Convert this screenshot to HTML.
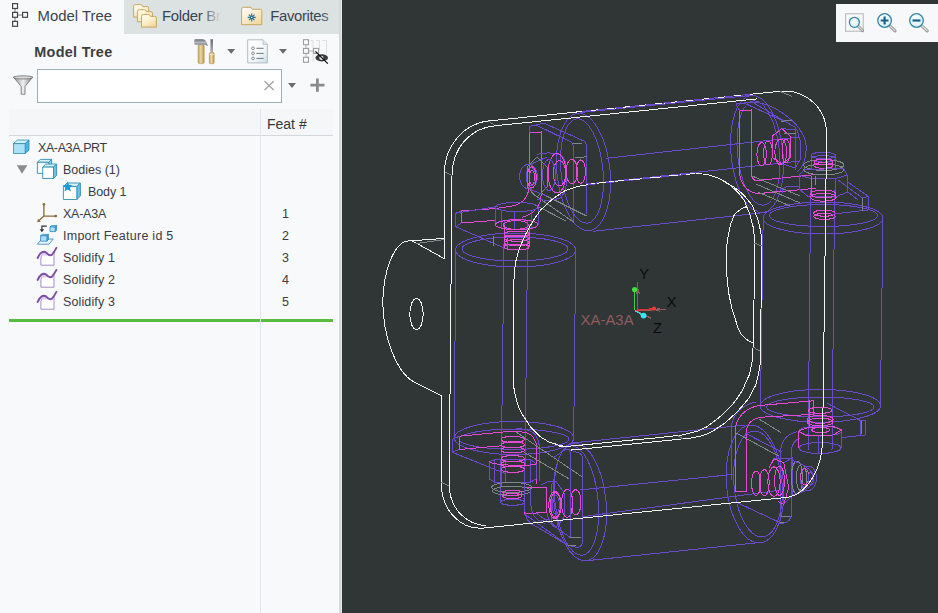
<!DOCTYPE html>
<html><head><meta charset="utf-8"><title>Model Tree</title>
<style>
html,body{margin:0;padding:0;}
body{width:938px;height:613px;overflow:hidden;background:#2f3635;font-family:"Liberation Sans",sans-serif;position:relative;}
#left{position:absolute;left:0;top:0;width:339px;height:613px;background:#f7f9fb;}
#split{position:absolute;left:339px;top:0;width:3px;height:613px;background:linear-gradient(90deg,#d3d8d9 0,#d3d8d9 67%,#e4e8e9 67%);}
#tabs{position:absolute;left:0;top:0;width:339px;height:34px;background:#dce1e2;}
#tab1{position:absolute;left:0;top:0;width:124px;height:34px;background:#f7f9fb;}
.t{position:absolute;white-space:nowrap;color:#3b3f42;line-height:1;}
.tab{font-size:14.9px;color:#3a4552;}
.row{font-size:12.5px;color:#3a3c44;}
.num{font-size:12.5px;color:#3a3c44;}
#hdr{position:absolute;left:9px;top:109px;width:324px;height:26px;background:#f4f6f7;border-bottom:1px solid #d3d8da;}
#colsep{position:absolute;left:260px;top:109px;width:1px;height:504px;background:#e3e6e8;z-index:3;}
#filter{position:absolute;left:37px;top:69px;width:243px;height:32px;background:#fff;border:1px solid #9fb0b6;}
#green{position:absolute;left:9px;top:319px;width:324px;height:3px;background:#58bd3f;}
#vp{position:absolute;left:342px;top:0;}
#ztb{position:absolute;left:836px;top:4px;width:102px;height:38px;background:#f7f8fa;}
</style></head><body>
<div id="left"></div>
<div id="split"></div>
<div id="tabs"><div id="tab1"></div></div>
<div class="t tab" id="tt1" style="left:37.5px;top:8.6px;">Model Tree</div>
<div class="t tab" id="tt2" style="left:162px;top:8.6px;letter-spacing:-0.3px;">Folder Br</div>
<div class="t tab" id="tt3" style="left:270.3px;top:8.6px;letter-spacing:-0.35px;">Favorites</div>
<div style="position:absolute;left:203px;top:4px;width:22px;height:26px;background:linear-gradient(90deg,rgba(220,225,226,0) 0%,rgba(220,225,226,0.55) 40%,rgba(220,225,226,0.92) 75%,#dce1e2 100%);"></div>
<div style="position:absolute;left:320px;top:4px;width:12px;height:26px;background:linear-gradient(90deg,rgba(220,225,226,0) 0%,rgba(220,225,226,0.45) 100%);"></div>
<div class="t" id="mt" style="left:34.3px;top:44.5px;font-weight:bold;font-size:14.4px;letter-spacing:0.3px;color:#3d3f42;">Model Tree</div>
<div id="filter"></div>
<div id="hdr"></div>
<div id="colsep"></div>
<div class="t" id="feat" style="left:267px;top:117px;font-size:14px;color:#33383c;">Feat #</div>
<div class="t row" id="r1" style="left:38px;top:142px;letter-spacing:-0.4px;">XA-A3A.PRT</div>
<div class="t row" id="r2" style="left:63px;top:164px;">Bodies (1)</div>
<div class="t row" id="r3" style="left:88px;top:186px;letter-spacing:-0.1px;">Body 1</div>
<div class="t row" id="r4" style="left:63px;top:208px;letter-spacing:-0.25px;">XA-A3A</div>
<div class="t row" id="r5" style="left:63px;top:230px;letter-spacing:0.26px;">Import Feature id 5</div>
<div class="t row" id="r6" style="left:63px;top:252px;letter-spacing:0.13px;">Solidify 1</div>
<div class="t row" id="r7" style="left:63px;top:274px;letter-spacing:0.13px;">Solidify 2</div>
<div class="t row" id="r8" style="left:63px;top:296px;letter-spacing:0.13px;">Solidify 3</div>
<div class="t num" id="n1" style="left:282px;top:208px;">1</div>
<div class="t num" id="n2" style="left:282px;top:230px;">2</div>
<div class="t num" id="n3" style="left:282px;top:252px;">3</div>
<div class="t num" id="n4" style="left:282px;top:274px;">4</div>
<div class="t num" id="n5" style="left:282px;top:296px;">5</div>
<div id="green"></div>
<svg id="icons" width="342" height="613" style="position:absolute;left:0;top:0;">
<defs>
<linearGradient id="gFold" x1="0" y1="0" x2="0.6" y2="1"><stop offset="0" stop-color="#fffdf4"/><stop offset="0.55" stop-color="#fcf0cf"/><stop offset="1" stop-color="#f3d99f"/></linearGradient>
<linearGradient id="gTan" x1="0" y1="0" x2="1" y2="0"><stop offset="0" stop-color="#c6a365"/><stop offset="0.45" stop-color="#ecd7a6"/><stop offset="1" stop-color="#b8934f"/></linearGradient>
<linearGradient id="gSteel2" x1="0" y1="0" x2="0" y2="1"><stop offset="0" stop-color="#62656f"/><stop offset="0.45" stop-color="#b4b7bf"/><stop offset="1" stop-color="#6a6d77"/></linearGradient>
<linearGradient id="gSteel" x1="0" y1="0" x2="0" y2="1"><stop offset="0" stop-color="#6d707a"/><stop offset="1" stop-color="#adb0ba"/></linearGradient>
<linearGradient id="gDoc" x1="0" y1="0" x2="1" y2="1"><stop offset="0" stop-color="#ffffff"/><stop offset="0.6" stop-color="#f4f8fa"/><stop offset="1" stop-color="#c9dde6"/></linearGradient>
<linearGradient id="gFun" x1="0" y1="0" x2="1" y2="0"><stop offset="0" stop-color="#8a8a8a"/><stop offset="0.5" stop-color="#f0f0f0"/><stop offset="1" stop-color="#7a7a7a"/></linearGradient>
<linearGradient id="gCubeW" x1="0" y1="0" x2="1" y2="1"><stop offset="0" stop-color="#ffffff"/><stop offset="1" stop-color="#eaf6fb"/></linearGradient>
</defs>
<!-- tab1 tree icon -->
<g fill="#fbfcfd" stroke="#454545" stroke-width="1.2">
<path d="M15 9 V12 M15 18 V21 M18 15 H22" stroke="#777" stroke-width="1" fill="none"/>
<rect x="12.6" y="3.6" width="4.9" height="4.9"/><rect x="12.6" y="12.4" width="4.9" height="4.9"/><rect x="12.6" y="21.4" width="4.9" height="4.9"/><rect x="22.6" y="12.4" width="4.9" height="4.9"/>
</g>
<!-- folder browser icon -->
<g fill="url(#gFold)" stroke="#c9a75e" stroke-width="1">
<path d="M133.6 17.1 V6.6 Q133.6 4.6 135.6 4.6 H140.5 Q142 4.6 142.6 6.6 H147.2 Q148.7 6.6 148.7 8.1 V17.1 Z"/>
<path d="M137.4 21.8 V11.7 Q137.4 9.7 139.4 9.7 H144.3 Q145.8 9.7 146.4 11.7 H151 Q152.5 11.7 152.5 13.2 V21.8 Z"/>
<path d="M141.5 27.1 V16.4 Q141.5 14.4 143.5 14.4 H148.4 Q149.9 14.4 150.5 16.4 H154.8 Q156.3 16.4 156.3 17.9 V27.1 Z"/>
</g>
<!-- favorites icon -->
<path d="M241.6 24.7 V9.3 Q241.6 7.3 243.6 7.3 H250 Q251.6 7.3 252.3 9.3 H260.3 Q261.8 9.3 261.8 10.8 V24.7 Z" fill="url(#gFold)" stroke="#c9a75e" stroke-width="1"/>
<g stroke="#1f6e98" stroke-width="1.1" fill="none"><path d="M251.7 13.4 V21.4 M247.7 17.4 H255.7 M248.9 14.6 L254.5 20.2 M254.5 14.6 L248.9 20.2"/></g>
<circle cx="251.7" cy="17.4" r="1.6" fill="#1f6e98"/><circle cx="251.7" cy="17.4" r="0.7" fill="#fff"/>
<!-- hammer / screwdriver -->
<rect x="198.1" y="44.6" width="6.1" height="19" rx="1.4" fill="url(#gTan)" stroke="#a88748" stroke-width="0.5"/>
<path d="M194.3 40.4 Q194.3 39.2 195.5 39.2 H202.6 Q206.8 39.6 207.9 46.3 L205.8 45.1 Q205 44.7 204.2 44.8 H195.5 Q194.3 44.8 194.3 43.6 Z" fill="url(#gSteel2)"/>
<rect x="210.4" y="39.2" width="2.6" height="13.4" fill="url(#gSteel)"/>
<rect x="209.3" y="52.6" width="4.9" height="11.1" rx="1.1" fill="url(#gTan)" stroke="#a88748" stroke-width="0.5"/>
<rect x="209.4" y="54.2" width="4.7" height="0.8" fill="#f6ecd0"/>
<path d="M227.2 49 H235.2 L231.2 53.7 Z" fill="#6b6b6b"/>
<path d="M279 49 H287 L283 53.7 Z" fill="#6b6b6b"/>
<!-- doc list icon -->
<path d="M247.7 39.8 H263 L267.4 44.4 V62.9 H247.7 Z" fill="url(#gDoc)" stroke="#b4bcc4" stroke-width="1"/>
<path d="M263 39.8 V44.4 H267.4" fill="#dfeaf0" stroke="#b4bcc4" stroke-width="0.8"/>
<g fill="#f4f4f4" stroke="#6a6a6a" stroke-width="0.7"><circle cx="253" cy="48.3" r="1.4"/><circle cx="253" cy="53.4" r="1.4"/><circle cx="253" cy="58.4" r="1.4"/></g>
<path d="M256.4 48.3 H263.6 M256.4 53.4 H263.6 M256.4 58.4 H263.6" stroke="#666" stroke-width="0.9"/>
<!-- tree eye icon -->
<g fill="none" stroke="#dcdfe0" stroke-width="1"><path d="M310.5 40.5 H313 V62 M316 40.5 H319.5 V50 M322 40.5 H326.5 V54"/></g>
<path d="M306 45 V48 M306 54 V57 M309 51 H313" stroke="#b5b5b5" stroke-width="1" fill="none"/>
<g fill="#fbfcfd" stroke="#9d9d9d" stroke-width="1.1"><rect x="303.5" y="39.7" width="5" height="5"/><rect x="303.5" y="48.4" width="5" height="5"/><rect x="303.5" y="57.3" width="5" height="5"/><rect x="313.6" y="48.4" width="5" height="5"/></g>
<ellipse cx="321.7" cy="57.8" rx="6.3" ry="3.6" fill="#3c3c3c"/><ellipse cx="321.4" cy="57.9" rx="2.1" ry="2.1" fill="#e8e8e8"/>
<path d="M315.4 51.4 L327.8 63.6" stroke="#111" stroke-width="1.3"/>
<!-- funnel -->
<path d="M13.4 77 Q23 79 32.8 77 L25 86.5 V94.3 H21.2 V86.5 Z" fill="url(#gFun)" stroke="#707070" stroke-width="0.8"/>
<ellipse cx="23.1" cy="77.4" rx="9.7" ry="1.6" fill="#d9d9d9" stroke="#707070" stroke-width="0.8"/>
<!-- filter clear X, dropdown, plus -->
<path d="M264.5 81.2 L273.7 90 M273.7 81.2 L264.5 90" stroke="#a3a3a3" stroke-width="1.3" fill="none"/>
<path d="M288 83 H296 L292 88 Z" fill="#6b6b6b"/>
<path d="M317.4 78.6 V91.8 M310.4 85.2 H324.5" stroke="#8a8a8a" stroke-width="2.8" fill="none"/>
<!-- part cube -->
<g stroke="#2d8db6" stroke-width="0.8" stroke-linejoin="round">
<path d="M13.5 143.6 L17.4 140 H29 L25.2 143.6 Z" fill="#d4f0fb"/>
<path d="M25.2 143.6 L29 140 V150 L25.2 153.5 Z" fill="#4db3e6"/>
<rect x="13.5" y="143.6" width="11.7" height="9.9" fill="#a9e1f6"/>
</g>
<!-- expand triangle -->
<path d="M16.7 165.2 H27.4 L22 173.7 Z" fill="#8c8c8c"/>
<!-- bodies icon -->
<g stroke="#2f8fb8" stroke-width="0.9" stroke-linejoin="round">
<path d="M37.4 162.3 L40.3 159.4 H51.6 L48.7 162.3 Z" fill="#d9f1fa"/><path d="M48.7 162.3 L51.6 159.4 V170.5 L48.7 173.4 Z" fill="#8ed0ec"/><rect x="37.4" y="162.3" width="11.3" height="11.1" fill="url(#gCubeW)"/>
<path d="M42.7 167.1 L45.8 164 H56.6 L53.5 167.1 Z" fill="#d9f1fa"/><path d="M53.5 167.1 L56.6 164 V175.4 L53.5 178.5 Z" fill="#6ec0e6"/><rect x="42.7" y="167.1" width="10.8" height="11.4" fill="#ffffff"/>
</g>
<!-- body 1 icon -->
<g stroke="#2f8fb8" stroke-width="0.9" stroke-linejoin="round">
<path d="M63.4 186.6 L67 183 H80.4 L76.8 186.6 Z" fill="#d9f1fa"/><path d="M76.8 186.6 L80.4 183 V196 L76.8 199.5 Z" fill="#6ec0e6"/><rect x="63.4" y="186.6" width="13.4" height="12.9" fill="#ffffff"/>
</g>
<path d="M67.6 181.6 L69 185 L72.8 185.3 L69.9 187.7 L70.9 191.4 L67.6 189.4 L64.3 191.4 L65.3 187.7 L62.4 185.3 L66.2 185 Z" fill="#1e9ad0"/>
<!-- csys icon -->
<g stroke="#8a6a35" stroke-width="1.3" fill="none"><path d="M43.9 204.5 V216.1 H55.5 M43.9 216.1 L38.3 221.2"/></g>
<g fill="#8a6a35"><circle cx="43.9" cy="204.3" r="1.3"/><circle cx="55.8" cy="216.1" r="1.3"/><path d="M37.2 222.3 L38 218.8 L40.8 221.6 Z"/></g>
<!-- import icon -->
<path d="M46.8 226.1 H41.9 V230" stroke="#333" stroke-width="1.2" fill="none"/><path d="M39.6 229.3 H44.2 L41.9 232.2 Z" fill="#333"/>
<g stroke="#2a86c0" stroke-width="0.8" stroke-linejoin="round">
<path d="M37.4 244.2 L41.6 239 H53.3 L49 244.2 Z" fill="#eaf6fc"/>
<path d="M50 227 L51.5 225.6 H56.6 L55.2 227 Z" fill="#d9f1fa"/><path d="M55.2 227 L56.6 225.6 V230.2 L55.2 231.6 Z" fill="#4db3e6"/><rect x="50" y="227" width="5.2" height="4.6" fill="#a9e1f6"/>
<path d="M40.6 235.8 L42.1 234.4 H48.4 L46.9 235.8 Z" fill="#d9f1fa"/><path d="M46.9 235.8 L48.4 234.4 V239.8 L46.9 241.2 Z" fill="#4db3e6"/><rect x="40.6" y="235.8" width="6.3" height="5.4" fill="#a9e1f6"/>
</g>
<!-- solidify icons -->
<g>
<path d="M40.9 257.5 Q43 251 46.5 253.5 Q49.5 256.5 51.5 255.2 L54 252 V265.2 H40.9 Z" fill="#ffffff" stroke="#a78cc8" stroke-width="1"/>
<path d="M43.5 252.6 Q47 252.5 49 255 Q51 256.5 53.8 252.3 L53.8 255.5 L41 255.5 Z" fill="#d9cbe9" stroke="none"/>
<path d="M37.6 258 Q41.5 249.5 46.3 252.6 Q49.5 256.3 51.8 254.8 Q54 252.5 56.4 247.9" fill="none" stroke="#7d4ea6" stroke-width="1.9" stroke-linecap="round"/>
</g>
<g transform="translate(0 22)">
<path d="M40.9 257.5 Q43 251 46.5 253.5 Q49.5 256.5 51.5 255.2 L54 252 V265.2 H40.9 Z" fill="#ffffff" stroke="#a78cc8" stroke-width="1"/>
<path d="M43.5 252.6 Q47 252.5 49 255 Q51 256.5 53.8 252.3 L53.8 255.5 L41 255.5 Z" fill="#d9cbe9" stroke="none"/>
<path d="M37.6 258 Q41.5 249.5 46.3 252.6 Q49.5 256.3 51.8 254.8 Q54 252.5 56.4 247.9" fill="none" stroke="#7d4ea6" stroke-width="1.9" stroke-linecap="round"/>
</g>
<g transform="translate(0 44)">
<path d="M40.9 257.5 Q43 251 46.5 253.5 Q49.5 256.5 51.5 255.2 L54 252 V265.2 H40.9 Z" fill="#ffffff" stroke="#a78cc8" stroke-width="1"/>
<path d="M43.5 252.6 Q47 252.5 49 255 Q51 256.5 53.8 252.3 L53.8 255.5 L41 255.5 Z" fill="#d9cbe9" stroke="none"/>
<path d="M37.6 258 Q41.5 249.5 46.3 252.6 Q49.5 256.3 51.8 254.8 Q54 252.5 56.4 247.9" fill="none" stroke="#7d4ea6" stroke-width="1.9" stroke-linecap="round"/>
</g>

</svg>
<svg id="vp" width="596" height="613" viewBox="342 0 596 613" fill="none" stroke-width="1" shape-rendering="crispEdges">
<ellipse cx="515.7" cy="250" rx="60" ry="17" stroke="#6a49cf" stroke-width="1"/>
<ellipse cx="515" cy="249" rx="53" ry="12" stroke="#6a49cf" stroke-width="1"/>
<ellipse cx="514" cy="438" rx="59.7" ry="16.5" stroke="#6a49cf" stroke-width="1"/>
<ellipse cx="514" cy="439.2" rx="54.9" ry="10.1" stroke="#6a49cf" stroke-width="1"/>
<line x1="455.7" y1="250" x2="454.3" y2="437" stroke="#6a49cf" stroke-width="1"/>
<line x1="575.7" y1="250" x2="573.7" y2="437" stroke="#6a49cf" stroke-width="1"/>
<line x1="504.3" y1="221" x2="500.8" y2="503" stroke="#6a49cf" stroke-width="1"/>
<line x1="527.8" y1="221" x2="524.6" y2="503" stroke="#6a49cf" stroke-width="1"/>
<ellipse cx="823" cy="218" rx="60" ry="16" stroke="#6a49cf" stroke-width="1"/>
<ellipse cx="823.3" cy="215.5" rx="54" ry="11" stroke="#6a49cf" stroke-width="1"/>
<ellipse cx="820.4" cy="405.8" rx="60.2" ry="16.4" stroke="#6a49cf" stroke-width="1"/>
<ellipse cx="820.2" cy="407" rx="53.7" ry="10" stroke="#6a49cf" stroke-width="1"/>
<line x1="763.2" y1="218" x2="760.5" y2="404.5" stroke="#6a49cf" stroke-width="1"/>
<line x1="883" y1="218" x2="880.4" y2="404.5" stroke="#6a49cf" stroke-width="1"/>
<line x1="810.6" y1="190" x2="808.2" y2="450" stroke="#6a49cf" stroke-width="1"/>
<line x1="834.6" y1="190" x2="832" y2="450" stroke="#6a49cf" stroke-width="1"/>
<ellipse cx="583.5" cy="172" rx="26.6" ry="59" stroke="#6a49cf" stroke-width="1" transform="rotate(-5.7 583.5 172)"/>
<ellipse cx="582" cy="171" rx="21" ry="52.5" stroke="#6a49cf" stroke-width="1" transform="rotate(-5.7 582 171)"/>
<ellipse cx="757" cy="154" rx="26" ry="59" stroke="#6a49cf" stroke-width="1" transform="rotate(-5.7 757 154)"/>
<ellipse cx="758.5" cy="153" rx="21" ry="52.5" stroke="#6a49cf" stroke-width="1" transform="rotate(-5.7 758.5 153)"/>
<line x1="580" y1="112.5" x2="750" y2="95.5" stroke="#6a49cf" stroke-width="1"/>
<line x1="593" y1="231.3" x2="766" y2="212.4" stroke="#6a49cf" stroke-width="1"/>
<line x1="605.8" y1="158.4" x2="749" y2="142.5" stroke="#6a49cf" stroke-width="1"/>
<line x1="586.6" y1="184" x2="736.5" y2="168" stroke="#6a49cf" stroke-width="1"/>
<line x1="736.5" y1="168" x2="800" y2="161" stroke="#6a49cf" stroke-width="1"/>
<line x1="749" y1="142.5" x2="800" y2="137" stroke="#6a49cf" stroke-width="1"/>
<ellipse cx="580" cy="502" rx="26" ry="59" stroke="#6a49cf" stroke-width="1" transform="rotate(-6 580 502)"/>
<ellipse cx="576.5" cy="500.5" rx="21.5" ry="55" stroke="#6a49cf" stroke-width="1" transform="rotate(-6 576.5 500.5)"/>
<ellipse cx="755" cy="484" rx="28.5" ry="59" stroke="#6a49cf" stroke-width="1" transform="rotate(-5 755 484)"/>
<ellipse cx="758" cy="484" rx="24" ry="53" stroke="#6a49cf" stroke-width="1" transform="rotate(-5 758 484)"/>
<line x1="569" y1="443.3" x2="745.5" y2="425" stroke="#6a49cf" stroke-width="1"/>
<line x1="586" y1="560.8" x2="756.6" y2="542.8" stroke="#6a49cf" stroke-width="1"/>
<line x1="580" y1="489.9" x2="734.4" y2="474.3" stroke="#6a49cf" stroke-width="1"/>
<line x1="582.4" y1="516.7" x2="781.5" y2="490" stroke="#6a49cf" stroke-width="1"/>
<path d="M541.1 195 L541.1 132 L529.2 132.9 L529.2 184.5 C529 195 524 203 513.8 205.8 L495.8 208.5 L461.3 211 L461.3 223 L495.8 220.3" stroke="#e64ad6" stroke-width="1" />
<path d="M541.1 195 C541 205 535 214 522 217.5" stroke="#e64ad6" stroke-width="1" />
<path d="M529.5 133 L529.5 126.4 L544 123.2 L584.5 141.3 C586.3 143 586.6 145 586.6 147.7 L586.6 214" stroke="#6a49cf" stroke-width="1" />
<path d="M536 124.9 L571.7 142.4 C573.3 144 573.8 146 573.8 149 L573.8 222" stroke="#6a49cf" stroke-width="1" />
<path d="M461.3 211 L455.7 213.2 L455.7 226.7 L506.5 249 M455.7 213.2 L498 206.4 M455.7 226.7 L461.3 223" stroke="#6a49cf" stroke-width="1" />
<path d="M541.8 193.6 L586.6 216 M531 192.5 L573.8 222.3 M535 205 L566 221" stroke="#7d8787" stroke-width="1" />
<line x1="571.7" y1="143" x2="582" y2="143" stroke="#7d8787" stroke-width="1"/>
<line x1="574.9" y1="158" x2="586.6" y2="156.7" stroke="#7d8787" stroke-width="1"/>
<ellipse cx="516.8" cy="207" rx="21.5" ry="4.6" stroke="#6a49cf" stroke-width="1"/>
<ellipse cx="516.8" cy="224.5" rx="21.5" ry="5" stroke="#6a49cf" stroke-width="1"/>
<line x1="495.3" y1="207" x2="495.3" y2="224.5" stroke="#6a49cf" stroke-width="1"/>
<line x1="538.3" y1="207" x2="538.3" y2="224.5" stroke="#6a49cf" stroke-width="1"/>
<line x1="514.8" y1="211.6" x2="514.8" y2="229.5" stroke="#6a49cf" stroke-width="1"/>
<line x1="501" y1="210.3" x2="501" y2="228" stroke="#6a49cf" stroke-width="1"/>
<line x1="531" y1="210.3" x2="531" y2="228" stroke="#6a49cf" stroke-width="1"/>
<ellipse cx="516.8" cy="224.7" rx="21.2" ry="5" stroke="#e64ad6" stroke-width="1"/>
<ellipse cx="515.9" cy="225" rx="12.7" ry="4.3" stroke="#e64ad6" stroke-width="1"/>
<ellipse cx="516.7" cy="234" rx="12.2" ry="3" stroke="#e64ad6" stroke-width="1"/>
<ellipse cx="516.7" cy="238.3" rx="12.2" ry="3" stroke="#e64ad6" stroke-width="1"/>
<ellipse cx="516.7" cy="242.6" rx="12.2" ry="3" stroke="#e64ad6" stroke-width="1"/>
<ellipse cx="516.7" cy="247" rx="12.2" ry="3" stroke="#e64ad6" stroke-width="1"/>
<line x1="504.5" y1="225" x2="504.5" y2="247" stroke="#e64ad6" stroke-width="1"/>
<line x1="529" y1="225" x2="529" y2="247" stroke="#e64ad6" stroke-width="1"/>
<line x1="493" y1="236" x2="493" y2="246" stroke="#7d8787" stroke-width="1"/>
<line x1="507" y1="238" x2="507" y2="249" stroke="#7d8787" stroke-width="1"/>
<ellipse cx="528.5" cy="176.5" rx="9" ry="12.2" stroke="#6a49cf" stroke-width="1"/>
<ellipse cx="531" cy="176.8" rx="5" ry="9.2" stroke="#6a49cf" stroke-width="1"/>
<ellipse cx="531.8" cy="177.3" rx="4.5" ry="10.6" stroke="#e64ad6" stroke-width="1"/>
<ellipse cx="532" cy="177.3" rx="2.4" ry="7" stroke="#e64ad6" stroke-width="1"/>
<path d="M527.0 167.0 L537.0 157.0 L547.0 167.0 L547.0 187.0 L537.0 197.0 L527.0 187.0 Z" stroke="#7d8787" stroke-width="1" />
<line x1="527" y1="167" x2="537" y2="157" stroke="#7d8787" stroke-width="1"/>
<line x1="527" y1="187" x2="537" y2="197" stroke="#7d8787" stroke-width="1"/>
<path d="M537 154.5 C543 152.5 556 152 562 156 C566 160 567 168 567 176 C567 186 565 194 560 198 C553 201 542 200.5 537 199" stroke="#6a49cf" stroke-width="1" />
<line x1="529" y1="165" x2="547" y2="157" stroke="#6a49cf" stroke-width="1"/>
<line x1="529" y1="189" x2="547" y2="196" stroke="#6a49cf" stroke-width="1"/>
<ellipse cx="557" cy="173.2" rx="9" ry="19.6" stroke="#e64ad6" stroke-width="1"/>
<ellipse cx="559.5" cy="173.2" rx="6.2" ry="12.7" stroke="#e64ad6" stroke-width="1"/>
<ellipse cx="571.8" cy="171.6" rx="5.7" ry="12.2" stroke="#e64ad6" stroke-width="1"/>
<ellipse cx="580.8" cy="171.6" rx="4.6" ry="11.7" stroke="#e64ad6" stroke-width="1"/>
<ellipse cx="549" cy="175" rx="6.5" ry="15.5" stroke="#6a49cf" stroke-width="1"/>
<path d="M501 445.8 L459.4 449.5 L459.4 436.2 L513.8 431 C525 431.5 531 434 533 437.3 C535.5 440.5 536.8 444 536.8 449 L536.8 484.2" stroke="#e64ad6" stroke-width="1" />
<path d="M524.5 514 L524.5 487.4 L547 487.4 M524.5 514 L536.2 513" stroke="#e64ad6" stroke-width="1" />
<path d="M459.4 436.2 L452 439.4 L452 452.2 L505.3 473.6 M452 452.2 L459.4 449.5" stroke="#6a49cf" stroke-width="1" />
<path d="M516 428.5 C527 429 534 432 536 436 C538.5 440 539.4 444 539.4 449 L539.4 481" stroke="#6a49cf" stroke-width="1" />
<path d="M516 432 L582 476.8 M522.3 451.2 L569.3 479" stroke="#7d8787" stroke-width="1" />
<path d="M489.3 461.8 L494.6 459.7 L530.9 459.7 L536.2 464 L536.2 478.9 L530.9 482 L494.6 482 L489.3 478.9 Z" stroke="#6a49cf" stroke-width="1" />
<path d="M494.6 459.7 L494.6 482 M500 459.7 L500 503 M505.3 459.7 L505.3 482 M524.5 459.7 L524.5 503 M530.9 459.7 L530.9 482" stroke="#6a49cf" stroke-width="1" />
<path d="M489.3 461.8 C496 466 530 466 536.2 464" stroke="#e64ad6" stroke-width="1" />
<ellipse cx="511.7" cy="487.4" rx="20" ry="5" stroke="#7d8787" stroke-width="1"/>
<ellipse cx="511.7" cy="490.8" rx="19" ry="4.6" stroke="#7d8787" stroke-width="1"/>
<ellipse cx="512.5" cy="502.3" rx="12" ry="3" stroke="#6a49cf" stroke-width="1"/>
<ellipse cx="512.3" cy="492.8" rx="9.5" ry="2.6" stroke="#e64ad6" stroke-width="1"/>
<ellipse cx="512.3" cy="496" rx="9.5" ry="2.6" stroke="#e64ad6" stroke-width="1"/>
<ellipse cx="512.8" cy="439.4" rx="11.7" ry="3" stroke="#e64ad6" stroke-width="1"/>
<ellipse cx="512.8" cy="444.8" rx="11.7" ry="3" stroke="#e64ad6" stroke-width="1"/>
<ellipse cx="512.8" cy="450" rx="11.7" ry="3" stroke="#e64ad6" stroke-width="1"/>
<ellipse cx="512.8" cy="458.6" rx="11.7" ry="3" stroke="#e64ad6" stroke-width="1"/>
<ellipse cx="512.8" cy="464" rx="11.7" ry="3" stroke="#e64ad6" stroke-width="1"/>
<ellipse cx="512.8" cy="469.3" rx="11.7" ry="3" stroke="#e64ad6" stroke-width="1"/>
<path d="M546.8 482 L556 481.3 L564 492.7 L564 517.2 L555.8 527.8 L548.4 518.8 L546.8 512.3" stroke="#6a49cf" stroke-width="1" />
<path d="M536.2 487.8 L546.8 487.8 L546.8 512.3 L536.2 513" stroke="#e64ad6" stroke-width="1" />
<path d="M546.8 482 L541 485 M548.4 518.8 L541 521 M556 481.3 L551 484.5 L551 524 L555.8 527.8" stroke="#6a49cf" stroke-width="1" />
<ellipse cx="555" cy="505" rx="6.2" ry="13.4" stroke="#e64ad6" stroke-width="1"/>
<ellipse cx="555.4" cy="505" rx="5.2" ry="12.2" stroke="#e64ad6" stroke-width="1"/>
<ellipse cx="555.8" cy="505" rx="3.6" ry="9.5" stroke="#6a49cf" stroke-width="1"/>
<ellipse cx="567.2" cy="503.3" rx="5.7" ry="13.9" stroke="#e64ad6" stroke-width="1"/>
<ellipse cx="575.7" cy="502.2" rx="5.3" ry="12.5" stroke="#e64ad6" stroke-width="1"/>
<path d="M524.5 487.4 C523.5 500 524 512 527 519 C530 524 534 526 538 527.5 L567 545" stroke="#6a49cf" stroke-width="1" />
<path d="M531 489 C530 500 531 511 534 516 C537 520 541 522 545 523.5" stroke="#6a49cf" stroke-width="1" />
<path d="M553 458 L566 449 C568.5 449 570.2 451 570.2 454 L570.2 537.5 M566 449 L578 452.5 C581 453.5 582.4 455.5 582.4 458.5 L582.4 542.4 C582 546 579 548 575 547 L568 545" stroke="#6a49cf" stroke-width="1" />
<path d="M524.5 514 L568 545.5 M536 513 L570.2 537.5" stroke="#6a49cf" stroke-width="1" />
<line x1="570.2" y1="537.5" x2="581" y2="537.5" stroke="#7d8787" stroke-width="1"/>
<line x1="567.7" y1="546" x2="576" y2="545.3" stroke="#7d8787" stroke-width="1"/>
<path d="M813.3 400.8 L759.3 405.5 C745 408 735.5 418 735.2 430.5 L735.2 491.5 L746.3 491.5 L746.3 433.3 C746.5 424 752 418.5 762 417.2 L813.3 414.3 Z" stroke="#e64ad6" stroke-width="1" />
<path d="M756 402 C741 405 731 416 731 430 L731 480" stroke="#6a49cf" stroke-width="1" />
<path d="M745.5 433.3 L781.5 452 M737 502.6 L778.7 522" stroke="#6a49cf" stroke-width="1" />
<path d="M758.8 419 L781 432.5 M735.5 432.6 L778.3 455.9" stroke="#7d8787" stroke-width="1" />
<line x1="780.7" y1="516" x2="791.5" y2="516" stroke="#7d8787" stroke-width="1"/>
<line x1="778.5" y1="523.2" x2="785.5" y2="522.2" stroke="#7d8787" stroke-width="1"/>
<path d="M780.7 521 L780.7 452 C781 440 788 434 797 431.7 M778 523 L782 523.5 C788 523 791.5 519 791.5 512 L791.5 450 C792 444 795 440 800 438" stroke="#6a49cf" stroke-width="1" />
<ellipse cx="820.5" cy="431" rx="21.5" ry="5" stroke="#6a49cf" stroke-width="1"/>
<ellipse cx="820" cy="448" rx="21" ry="5.5" stroke="#6a49cf" stroke-width="1"/>
<line x1="798.7" y1="431" x2="798.7" y2="448" stroke="#e64ad6" stroke-width="1"/>
<line x1="841.5" y1="431" x2="841.5" y2="448" stroke="#6a49cf" stroke-width="1"/>
<line x1="818" y1="436" x2="818" y2="453.5" stroke="#6a49cf" stroke-width="1"/>
<path d="M798.7 431 L808 427.5 L834 426.8 L841.5 430 L833 435 L806 435.6 Z" stroke="#e64ad6" stroke-width="1" />
<ellipse cx="820.7" cy="430" rx="9" ry="2.6" stroke="#e64ad6" stroke-width="1"/>
<ellipse cx="820.1" cy="410.3" rx="12" ry="3" stroke="#e64ad6" stroke-width="1"/>
<ellipse cx="820.1" cy="419.3" rx="13" ry="4" stroke="#e64ad6" stroke-width="1"/>
<ellipse cx="820.1" cy="422" rx="13" ry="4" stroke="#e64ad6" stroke-width="1"/>
<line x1="813.3" y1="400.8" x2="813.3" y2="414.3" stroke="#e64ad6" stroke-width="1"/>
<line x1="809" y1="400" x2="809" y2="426" stroke="#e64ad6" stroke-width="1"/>
<path d="M827.3 403.3 L860.3 420.4 L865.2 420.4 L865.2 435 L842 437.5 M860.3 420.4 L860.3 435 L865.2 435" stroke="#6a49cf" stroke-width="1" />
<line x1="861.5" y1="421" x2="861.5" y2="434" stroke="#7d8787" stroke-width="1"/>
<ellipse cx="756.1" cy="483.2" rx="4.6" ry="12.2" stroke="#e64ad6" stroke-width="1"/>
<ellipse cx="764.3" cy="482.7" rx="4.9" ry="13" stroke="#e64ad6" stroke-width="1"/>
<ellipse cx="774" cy="481.6" rx="6.2" ry="14.7" stroke="#e64ad6" stroke-width="1"/>
<ellipse cx="779.5" cy="480.8" rx="5" ry="14.5" stroke="#e64ad6" stroke-width="1"/>
<path d="M769.2 467.7 L774 458.8 L783.8 462.8 L788.7 487.3 L783.8 504.4 L778 501.5" stroke="#e64ad6" stroke-width="1" />
<path d="M773.5 458.8 L792 458 L792 495.5 L783.8 504.4 M783.8 462.8 L792 458" stroke="#6a49cf" stroke-width="1" />
<ellipse cx="796.9" cy="477.5" rx="5.7" ry="16.3" stroke="#7d8787" stroke-width="1"/>
<ellipse cx="801.5" cy="477.8" rx="5.2" ry="13.5" stroke="#7d8787" stroke-width="1"/>
<ellipse cx="808.3" cy="478.3" rx="8.2" ry="12.2" stroke="#6a49cf" stroke-width="1"/>
<ellipse cx="806.5" cy="478" rx="6" ry="10.2" stroke="#6a49cf" stroke-width="1"/>
<ellipse cx="804.7" cy="476.7" rx="4" ry="8.2" stroke="#e64ad6" stroke-width="1"/>
<ellipse cx="811" cy="478.5" rx="2.6" ry="6.5" stroke="#6a49cf" stroke-width="1"/>
<line x1="792" y1="460" x2="806" y2="466.3" stroke="#6a49cf" stroke-width="1"/>
<line x1="792" y1="495.5" x2="807" y2="490.3" stroke="#6a49cf" stroke-width="1"/>
<path d="M751.6 174.5 L751.6 110 L739.6 110.5 L739.6 172.3 C740 184 747 192 758 193.6 L816 188.3" stroke="#e64ad6" stroke-width="1" />
<path d="M751.6 174.5 C752 178 753 180 756 180.6 L816 174.5" stroke="#e64ad6" stroke-width="1" />
<path d="M739.6 110.5 L736 104 L752 102 L795.7 127.6 L795.7 170.2" stroke="#6a49cf" stroke-width="1" />
<path d="M744 103 L784 121.2" stroke="#6a49cf" stroke-width="1" />
<path d="M752 102 C775 103 806 125 806.3 148.5 C806 160 802 168 797 172" stroke="#6a49cf" stroke-width="1" />
<line x1="780.8" y1="121.2" x2="792.5" y2="120.5" stroke="#7d8787" stroke-width="1"/>
<line x1="784" y1="134" x2="795.7" y2="133" stroke="#7d8787" stroke-width="1"/>
<path d="M752 176 L800 196 M756 184 L800 203 M758 192 L790 206" stroke="#7d8787" stroke-width="1" />
<path d="M772.2 136.1 L781.8 128.6 L790.4 136.1 L790.4 157.4 L781.8 163.8 L772.2 157.4 Z" stroke="#e64ad6" stroke-width="1" />
<ellipse cx="761.6" cy="154.2" rx="4.7" ry="11.7" stroke="#e64ad6" stroke-width="1"/>
<ellipse cx="768" cy="153" rx="4.5" ry="12" stroke="#e64ad6" stroke-width="1"/>
<ellipse cx="780.8" cy="152" rx="6" ry="13" stroke="#e64ad6" stroke-width="1"/>
<ellipse cx="786" cy="151" rx="4" ry="12" stroke="#e64ad6" stroke-width="1"/>
<path d="M781.8 128.6 L797 130 L800 140 L800 160 L795 168 L781.8 163.8" stroke="#6a49cf" stroke-width="1" />
<ellipse cx="823.3" cy="155.5" rx="12.2" ry="3.3" stroke="#6a49cf" stroke-width="1"/>
<ellipse cx="823.3" cy="158.8" rx="12.2" ry="3.3" stroke="#6a49cf" stroke-width="1"/>
<line x1="811.1" y1="155.5" x2="811" y2="170" stroke="#6a49cf" stroke-width="1"/>
<line x1="835.5" y1="155.5" x2="835.5" y2="170" stroke="#6a49cf" stroke-width="1"/>
<ellipse cx="823.8" cy="165" rx="20" ry="5.5" stroke="#7d8787" stroke-width="1"/>
<ellipse cx="823.8" cy="169.5" rx="20" ry="5.5" stroke="#7d8787" stroke-width="1"/>
<ellipse cx="823.4" cy="162" rx="9.6" ry="2.8" stroke="#e64ad6" stroke-width="1"/>
<ellipse cx="823.4" cy="165.5" rx="9.6" ry="2.8" stroke="#e64ad6" stroke-width="1"/>
<path d="M799.2 175 L804.5 169.4 L843.6 168.6 L847.2 175 L847.2 192.2 L835.5 197 L807.7 196.3 L799.2 189 Z" stroke="#6a49cf" stroke-width="1" />
<path d="M799.2 175 L811.8 179 L835.5 178.6 L847.2 175 M811.8 179 L811.8 196.3 M835.5 178.6 L835.5 197" stroke="#6a49cf" stroke-width="1" />
<ellipse cx="823.3" cy="194" rx="12.8" ry="4" stroke="#e64ad6" stroke-width="1"/>
<ellipse cx="823.3" cy="197.2" rx="12.8" ry="4" stroke="#e64ad6" stroke-width="1"/>
<ellipse cx="824.4" cy="213.2" rx="10.7" ry="3" stroke="#e64ad6" stroke-width="1"/>
<ellipse cx="824.4" cy="216.4" rx="10.7" ry="3" stroke="#e64ad6" stroke-width="1"/>
<line x1="811.6" y1="175.8" x2="811.6" y2="196" stroke="#e64ad6" stroke-width="1"/>
<line x1="815.8" y1="175.8" x2="815.8" y2="185.4" stroke="#e64ad6" stroke-width="1"/>
<path d="M847.8 182.2 L868 196.1 L868 210 L832 214.2 M838.2 180.1 L862.7 198.2 L868 196.1" stroke="#6a49cf" stroke-width="1" />
<line x1="862.7" y1="198.2" x2="862.7" y2="210.6" stroke="#7d8787" stroke-width="1"/>
<path d="M800 186 L790 186 C785 186 782 189 782 193 M848 192 L858 200" stroke="#6a49cf" stroke-width="1" />
<path d="M444.2 258.6 L444.4 172 C444.4 146.4 464.1 123.5 488.2 121 L779.7 91.3 C805.5 88.7 826.6 107.9 826.6 134 L824.9 265 L822.6 440 C822.3 470 806 495.4 785.7 497.5 L484 528 C460.5 530.4 441.3 510.1 441.3 483 L441.4 395.7 L413.7 381.8 C396 372 382.5 335 382.8 300 C384 270 393 247 405.2 241.2 L444.2 238.4" stroke="#f4f4f4" stroke-width="1" />
<path d="M411.6 240.5 L444.2 258.6" stroke="#f4f4f4" stroke-width="1" />
<line x1="415.8" y1="243.7" x2="444.2" y2="239.5" stroke="#7d8787" stroke-width="1"/>
<path d="M757 98.9 L494.6 125.8 C470 128.5 452.3 148 452 174.9 L450.6 330 L449.2 485 C449.5 508 465 524 486 525.8" stroke="#f4f4f4" stroke-width="1" />
<line x1="444.5" y1="171.7" x2="452" y2="175.3" stroke="#7d8787" stroke-width="1"/>
<line x1="488.2" y1="121" x2="494.6" y2="125.3" stroke="#7d8787" stroke-width="1"/>
<line x1="441.3" y1="482" x2="449.2" y2="486.3" stroke="#7d8787" stroke-width="1"/>
<line x1="779.7" y1="91.3" x2="792" y2="96.3" stroke="#7d8787" stroke-width="1"/>
<ellipse cx="416.5" cy="314" rx="6.7" ry="15.5" stroke="#f4f4f4" stroke-width="1"/>
<path d="M513.3 377.6 C513.0 357.6 513.4 362.5 513.6 330.0 C513.8 297.5 513.5 301.2 514.0 280.0 C514.5 258.8 513.8 275.4 515.1 266.5 C516.4 257.6 515.4 262.1 518.0 253.4 C520.6 244.7 519.2 249.1 523.0 240.4 C526.8 231.7 524.6 236.0 529.5 227.3 C534.4 218.6 532.2 221.6 537.6 214.3 C543.0 207.0 538.7 211.8 545.8 205.3 C552.9 198.8 550.6 200.1 558.8 194.7 C567.0 189.3 561.0 192.3 570.3 189.0 C579.6 185.7 575.0 187.1 586.6 184.9 C598.2 182.7 583.9 184.7 605.0 182.4 C626.1 180.1 625.0 180.5 650.0 178.0 C675.0 175.5 663.5 176.4 680.0 175.0 C696.5 173.6 688.7 173.5 699.6 173.9 C710.5 174.3 704.5 173.9 712.6 176.3 C720.7 178.7 716.9 177.1 724.0 181.2 C731.1 185.3 727.8 183.1 733.8 188.5 C739.8 193.9 737.6 191.2 742.0 197.5 C746.4 203.8 743.6 199.1 746.9 207.3 C750.2 215.5 749.4 212.2 751.8 222.0 C754.2 231.8 753.2 224.0 754.2 236.7 C755.2 249.4 754.8 238.9 754.7 260.0 C754.6 281.1 754.5 272.3 754.0 300.0 C753.5 327.7 754.1 321.2 753.2 343.0 C752.3 364.8 753.8 352.3 751.4 365.3 C749.0 378.3 750.4 371.6 746.0 382.0 C741.6 392.4 745.0 386.9 738.3 396.6 C731.6 406.3 734.7 402.3 726.0 411.0 C717.3 419.7 719.9 416.9 712.2 422.7 C704.5 428.5 710.4 425.1 703.0 428.5 C695.6 431.9 701.0 430.4 690.0 433.0 C679.0 435.6 693.3 433.7 670.0 436.4 C646.7 439.1 653.7 437.9 620.0 441.2 C586.3 444.5 588.3 444.7 569.0 446.2 C549.7 447.7 566.7 446.6 562.0 445.8 C557.3 445.0 560.3 445.7 555.0 443.8 C549.7 441.9 552.8 444.4 546.0 440.2 C539.2 436.0 541.4 438.2 534.6 431.3 C527.8 424.4 530.6 426.8 525.6 419.4 C520.6 412.0 522.6 415.5 519.6 409.0 C516.6 402.5 518.3 406.3 516.6 400.0 C514.9 393.7 515.5 397.5 514.4 390.0 C513.3 382.5 513.6 397.6 513.3 377.6 Z" stroke="#f4f4f4" stroke-width="1" />
<path d="M722.0 180.3 C724.3 181.7 724.0 181.5 729.0 184.5 C734.0 187.5 730.5 184.0 737.0 189.4 C743.5 194.8 742.5 193.2 748.5 200.8 C754.5 208.4 751.2 203.0 755.0 212.2 C758.8 221.4 757.8 217.6 760.0 228.5 C762.2 239.4 761.1 234.3 761.6 244.8 C762.1 255.3 761.8 238.3 761.6 260.0 C761.4 281.7 761.4 279.3 761.0 310.0 C760.6 340.7 761.5 330.1 760.5 352.0 C759.5 373.9 760.8 362.4 758.0 375.7 C755.2 389.0 756.8 382.4 752.0 392.0 C747.2 401.6 750.6 395.9 743.6 404.4 C736.6 412.9 739.7 409.6 731.0 417.5 C722.3 425.4 726.1 422.3 717.4 428.0 C708.7 433.7 713.1 431.5 705.0 434.7 C696.9 437.9 700.8 436.1 693.0 437.5 C685.2 438.9 702.5 436.8 681.5 439.0 C660.5 441.2 667.0 440.5 630.0 444.2 C593.0 447.9 590.4 448.1 570.6 450.1" stroke="#f4f4f4" stroke-width="1" />
<line x1="754.5" y1="243" x2="761.6" y2="246" stroke="#7d8787" stroke-width="1"/>
<line x1="753" y1="347" x2="760.5" y2="351.5" stroke="#7d8787" stroke-width="1"/>
<line x1="678" y1="435.6" x2="683" y2="439" stroke="#7d8787" stroke-width="1"/>
<path d="M746.5 206.5 C743.3 208.4 741.8 207.6 737.0 212.2 C732.2 216.8 734.9 213.9 732.2 220.4 C729.5 226.9 730.8 223.1 729.0 231.8 C727.2 240.5 727.7 237.1 726.8 246.5 C725.9 255.9 726.0 248.2 726.2 260.0 C726.4 271.8 726.0 267.9 727.5 282.0 C729.0 296.1 728.1 290.3 730.6 302.3 C733.1 314.3 732.2 308.8 735.0 318.0 C737.8 327.2 735.7 323.3 739.0 330.0 C742.3 336.7 740.4 333.7 745.0 338.0 C749.6 342.3 750.1 341.3 752.7 343.0" stroke="#f4f4f4" stroke-width="1" />
<line x1="582" y1="111.4" x2="750" y2="94.3" stroke="#6a49cf" stroke-dasharray="9 7"/>
<line x1="588" y1="184.7" x2="696" y2="173.4" stroke="#6a49cf" stroke-dasharray="9 9"/>
<line x1="637.4" y1="310.6" x2="637.8" y2="282.2" stroke="#8b5d5f" stroke-width="1"/>
<line x1="636" y1="310.8" x2="666" y2="309.3" stroke="#8b5d5f" stroke-width="1"/>
<line x1="636" y1="310.6" x2="651" y2="318.3" stroke="#8b5d5f" stroke-width="1"/>
<path d="M636.6 294 L637.8 288 L639.4 294 M660 308 L655 309.6 L660 311.4" stroke="#8b5d5f" stroke-width="1" />
<line x1="634.6" y1="310.4" x2="634.6" y2="289.5" stroke="#3fd23f" stroke-width="1.3"/>
<line x1="634.6" y1="310.4" x2="653.8" y2="308.7" stroke="#e03030" stroke-width="1.3"/>
<line x1="634.6" y1="310.4" x2="643.6" y2="315.6" stroke="#35d8e0" stroke-width="1.3"/>
<circle cx="634.6" cy="289.5" r="2.6" fill="#3fe03f" stroke="none" shape-rendering="geometricPrecision"/>
<circle cx="654" cy="308.7" r="2.1" fill="#f03a3a" stroke="none" shape-rendering="geometricPrecision"/>
<circle cx="643.6" cy="315.6" r="2.9" fill="#38e4ee" stroke="none" shape-rendering="geometricPrecision"/>
<g font-family="Liberation Sans, sans-serif" stroke="none">
<text x="639.3" y="279" font-size="14.6" fill="#0b0b0b">Y</text>
<text x="666.7" y="307" font-size="14.6" fill="#0b0b0b">X</text>
<text x="652.9" y="332.8" font-size="14.6" fill="#0b0b0b">Z</text>
<text x="580.6" y="325" font-size="14.9" letter-spacing="0" fill="#8f5b60">XA-A3A</text>
</g>
</svg>
<div id="ztb"></div>
<svg id="zicons" width="102" height="38" viewBox="836 4 102 38" style="position:absolute;left:836px;top:4px;">
<defs><radialGradient id="gLens" cx="0.4" cy="0.35" r="0.8"><stop offset="0" stop-color="#ffffff"/><stop offset="1" stop-color="#d4ecf6"/></radialGradient></defs>
<rect x="845.6" y="13.8" width="17.6" height="17.4" fill="#f8f9fa" stroke="#b9b9b9" stroke-width="1.1"/>
<path d="M858 26 L862.6 30.6" stroke="#9a9a9a" stroke-width="3" stroke-linecap="round"/><path d="M858 26 L862.4 30.4" stroke="#dedede" stroke-width="1.2" stroke-linecap="round"/>
<circle cx="854.4" cy="22.3" r="5" fill="url(#gLens)" stroke="#2f86ab" stroke-width="1.3"/>
<path d="M889.6 25.6 L895 30.8" stroke="#9a9a9a" stroke-width="3.2" stroke-linecap="round"/><path d="M889.6 25.6 L894.8 30.6" stroke="#e2e2e2" stroke-width="1.3" stroke-linecap="round"/>
<circle cx="884.6" cy="20.5" r="6.8" fill="url(#gLens)" stroke="#2f86ab" stroke-width="1.3"/>
<path d="M884.6 16.6 V24.4 M880.7 20.5 H888.5" stroke="#16628c" stroke-width="2.2"/>
<path d="M921.6 25.6 L927.2 30.8" stroke="#9a9a9a" stroke-width="3.2" stroke-linecap="round"/><path d="M921.6 25.6 L927 30.6" stroke="#e2e2e2" stroke-width="1.3" stroke-linecap="round"/>
<circle cx="916.5" cy="20.5" r="6.8" fill="url(#gLens)" stroke="#2f86ab" stroke-width="1.3"/>
<path d="M912.5 20.5 H920.5" stroke="#16628c" stroke-width="2.2"/>

</svg>
</body></html>
